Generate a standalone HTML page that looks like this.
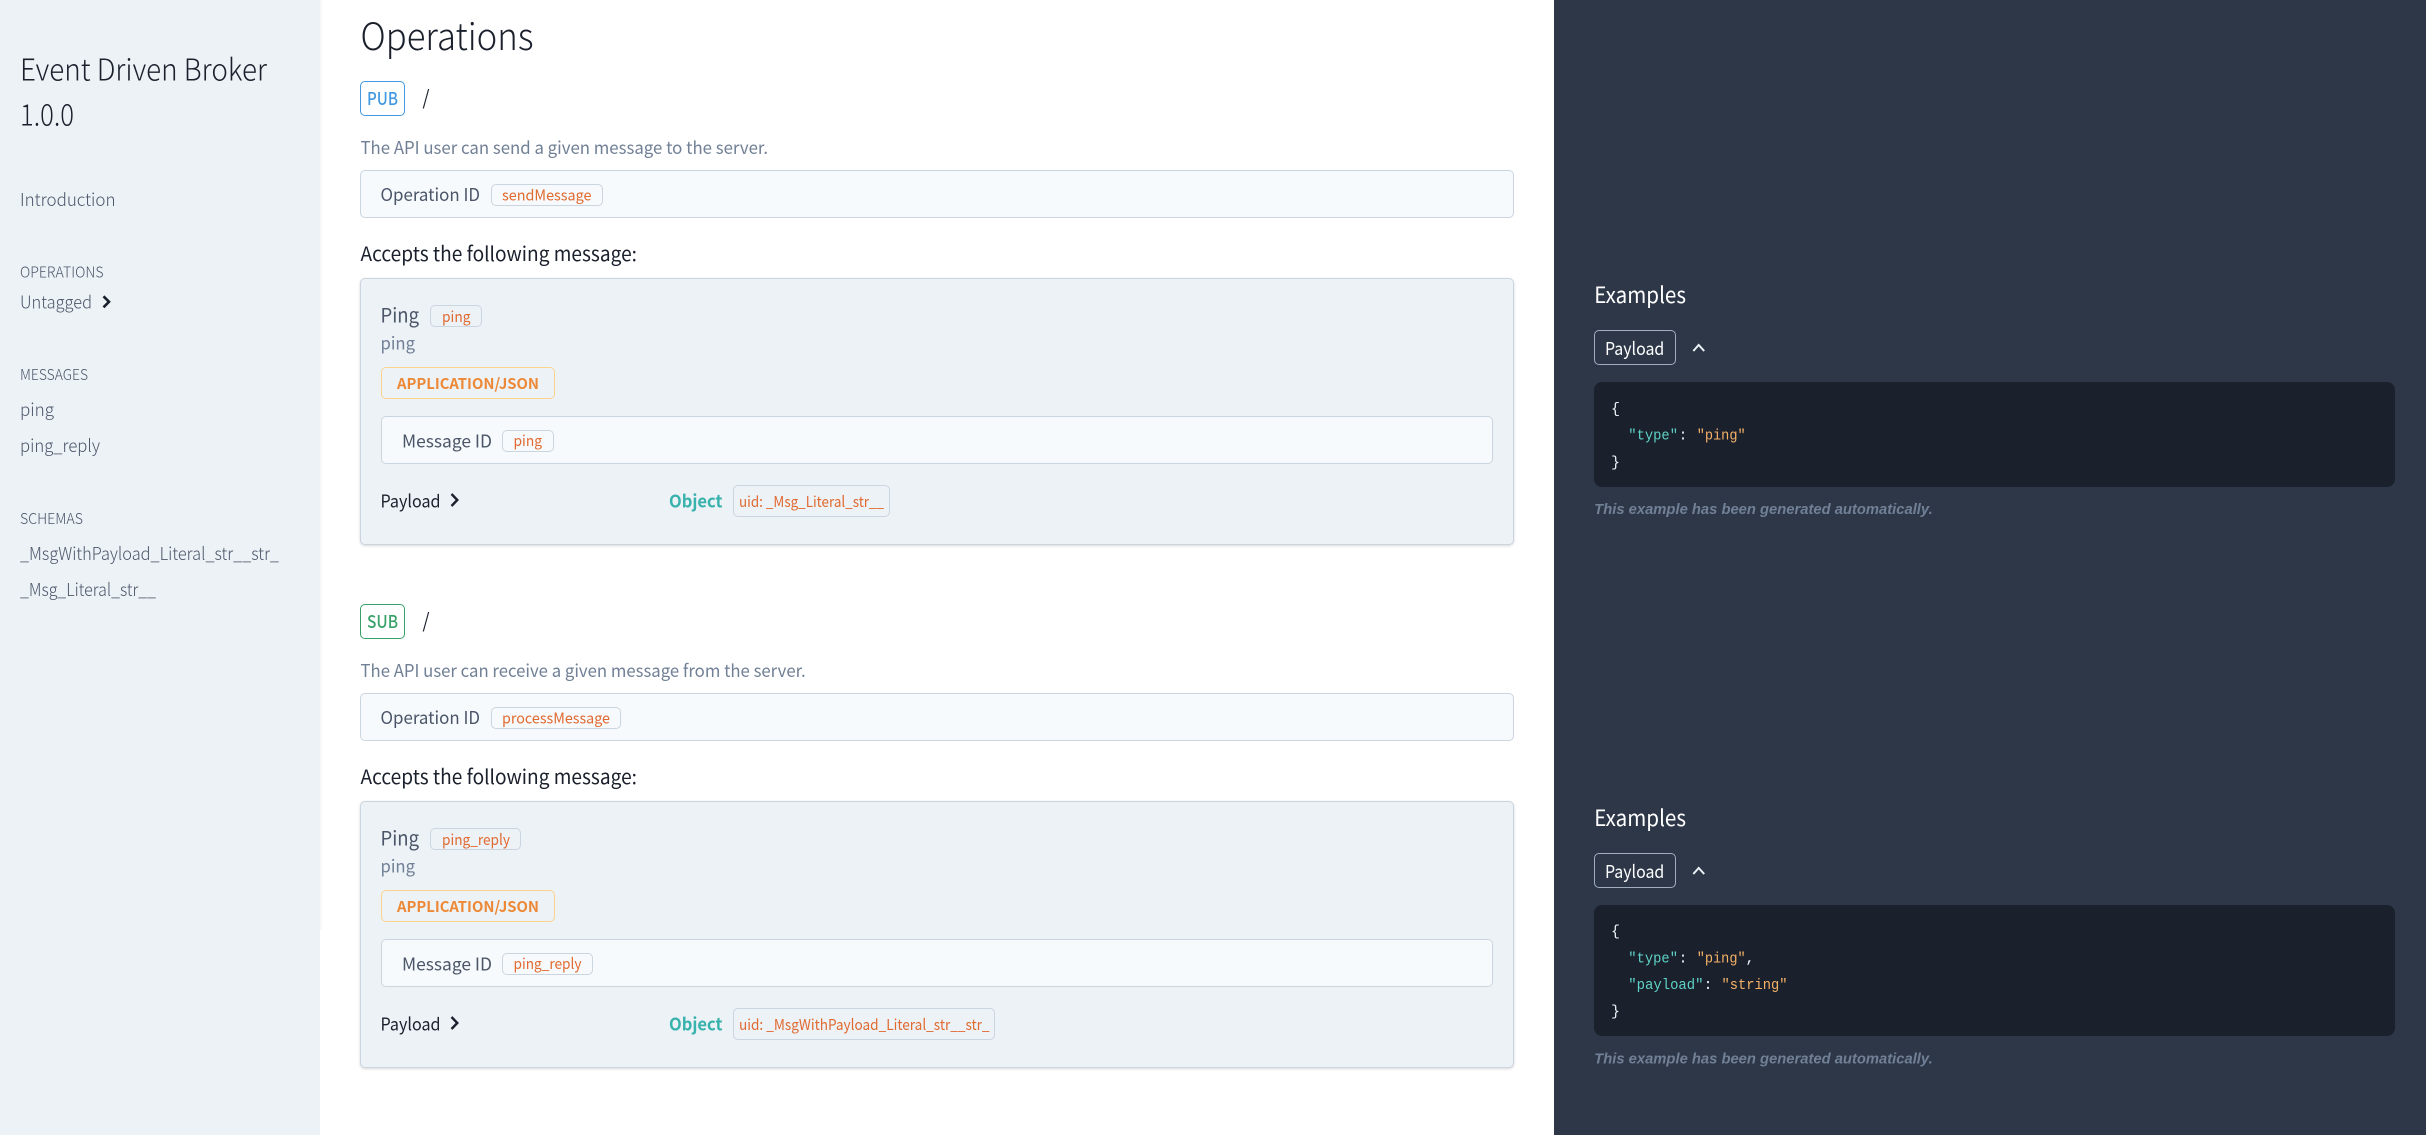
<!DOCTYPE html>
<html lang="en">
<head>
<meta charset="utf-8">
<title>Event Driven Broker 1.0.0</title>
<style>
html,body{margin:0;padding:0;width:2426px;height:1135px;overflow:hidden;background:#fff}
.b{position:absolute;box-sizing:border-box}
#side{left:0;top:0;width:320px;height:1135px;background:#edf2f7}
#sideedge{left:320px;top:0;width:2px;height:930px;background:#f6f8fa}
#panel{left:1554px;top:0;width:872px;height:1135px;background:#2d3748}
.badge{width:45px;height:35px;border-radius:5px;border:1px solid;background:#fff}
.opid{left:360px;width:1154px;height:48px;background:#f7fafc;border:1px solid #cbd5e0;border-radius:5px}
.card{left:360px;width:1154px;height:267px;background:#edf2f7;border:1px solid #cbd5e0;border-radius:5px;box-shadow:0 1px 3px rgba(0,0,0,.1),0 1px 2px rgba(0,0,0,.06)}
.tag{height:22px;border:1px solid #cbd5e0;border-radius:5px}
.app{left:381px;width:174px;height:32px;border:1px solid #fbd38d;border-radius:5px}
.mid{left:381px;width:1112px;height:48px;background:#f7fafc;border:1px solid #cbd5e0;border-radius:5px}
.uid{left:733px;height:32px;border:1px solid #cbd5e0;border-radius:5px}
.btn{left:1594px;width:82px;height:35px;border:1px solid #a0aec0;border-radius:5px}
.code{left:1594px;width:801px;background:#1a202c;border-radius:8px}
svg{position:absolute;left:0;top:0}
text{font-family:"Noto Sans CJK JP","Liberation Sans",sans-serif;white-space:pre}
.l{font-weight:300}
.s{font-weight:500}
.m{font-family:"Liberation Mono",monospace;font-size:15px}
.f{font-family:"Liberation Sans",sans-serif;font-weight:700;font-style:italic;font-size:14.5px;fill:#718096}
</style>
</head>
<body>
<div class="b" id="side"></div>
<div class="b" id="sideedge"></div>
<div class="b" id="panel"></div>

<div class="b badge" style="left:360px;top:81px;border-color:#4299e1"></div>
<div class="b opid" style="top:170px"></div>
<div class="b tag" style="left:491px;top:184px;width:112px"></div>
<div class="b card" style="top:278px"></div>
<div class="b tag" style="left:430px;top:305px;width:52px"></div>
<div class="b app" style="top:367px"></div>
<div class="b mid" style="top:416px"></div>
<div class="b tag" style="left:502px;top:430px;width:52px"></div>
<div class="b uid" style="top:485px;width:157px"></div>

<div class="b badge" style="left:360px;top:604px;border-color:#38a169"></div>
<div class="b opid" style="top:693px"></div>
<div class="b tag" style="left:491px;top:707px;width:130px"></div>
<div class="b card" style="top:801px"></div>
<div class="b tag" style="left:430px;top:828px;width:91px"></div>
<div class="b app" style="top:890px"></div>
<div class="b mid" style="top:939px"></div>
<div class="b tag" style="left:502px;top:953px;width:91px"></div>
<div class="b uid" style="top:1008px;width:262px"></div>

<div class="b btn" style="top:330px"></div>
<div class="b code" style="top:382px;height:105px"></div>
<div class="b btn" style="top:853px"></div>
<div class="b code" style="top:905px;height:131px"></div>

<svg width="2426" height="1135" viewBox="0 0 2426 1135" xmlns="http://www.w3.org/2000/svg">
  <!-- sidebar -->
  <g fill="#1a202c" font-size="30">
    <text class="l" x="20" y="80.5" textLength="247" lengthAdjust="spacingAndGlyphs">Event Driven Broker</text>
    <text class="l" x="20" y="125.5" textLength="54" lengthAdjust="spacingAndGlyphs">1.0.0</text>
  </g>
  <g fill="#4a5568" font-size="17.5">
    <text class="l" x="20" y="206" textLength="95.5" lengthAdjust="spacingAndGlyphs">Introduction</text>
    <text class="l" x="20" y="308.7" textLength="72" lengthAdjust="spacingAndGlyphs">Untagged</text>
    <text class="l" x="20" y="416" textLength="34" lengthAdjust="spacingAndGlyphs">ping</text>
    <text class="l" x="20" y="452" textLength="80" lengthAdjust="spacingAndGlyphs">ping_reply</text>
    <text class="l" x="20" y="560" textLength="259" lengthAdjust="spacingAndGlyphs">_MsgWithPayload_Literal_str__str_</text>
    <text class="l" x="20" y="596" textLength="136" lengthAdjust="spacingAndGlyphs">_Msg_Literal_str__</text>
  </g>
  <g fill="#4a5568" font-size="15">
    <text class="l" x="20" y="277.5" textLength="83.5" lengthAdjust="spacingAndGlyphs">OPERATIONS</text>
    <text class="l" x="20" y="380" textLength="68" lengthAdjust="spacingAndGlyphs">MESSAGES</text>
    <text class="l" x="20" y="524" textLength="63" lengthAdjust="spacingAndGlyphs">SCHEMAS</text>
  </g>
  <path d="M103.5 296.3 L109 301.8 L103.5 307.3" fill="none" stroke="#1a202c" stroke-width="2.6"/>

  <!-- main heading -->
  <text class="l" x="360.5" y="50" font-size="37.5" fill="#1a202c" textLength="173" lengthAdjust="spacingAndGlyphs">Operations</text>

  <!-- operation 1 -->
  <text class="s" x="367" y="105" font-size="17.5" fill="#4299e1" textLength="31" lengthAdjust="spacingAndGlyphs">PUB</text>
  <text x="422.5" y="105" font-size="20" fill="#1a202c" textLength="7" lengthAdjust="spacingAndGlyphs">/</text>
  <text x="360.5" y="154" font-size="17.5" fill="#718096" textLength="407.5" lengthAdjust="spacingAndGlyphs">The API user can send a given message to the server.</text>
  <text x="380.5" y="201" font-size="17.5" fill="#4a5568" textLength="99.5" lengthAdjust="spacingAndGlyphs">Operation ID</text>
  <text x="502" y="200.5" font-size="15" fill="#e06a30" textLength="89.5" lengthAdjust="spacingAndGlyphs">sendMessage</text>
  <text x="360.5" y="261" font-size="20" fill="#1a202c" textLength="276.5" lengthAdjust="spacingAndGlyphs">Accepts the following message:</text>
  <text x="380.5" y="322.7" font-size="20" fill="#4a5568" textLength="38.5" lengthAdjust="spacingAndGlyphs">Ping</text>
  <text x="442" y="322.2" font-size="15" fill="#e06a30" textLength="28.5" lengthAdjust="spacingAndGlyphs">ping</text>
  <text x="380.5" y="349.3" font-size="17.5" fill="#718096" textLength="34.5" lengthAdjust="spacingAndGlyphs">ping</text>
  <text x="397" y="389" font-size="15" font-weight="700" fill="#ed8936" textLength="142" lengthAdjust="spacingAndGlyphs">APPLICATION/JSON</text>
  <text x="402" y="447.3" font-size="17.5" fill="#4a5568" textLength="90" lengthAdjust="spacingAndGlyphs">Message ID</text>
  <text x="513.5" y="446.2" font-size="15" fill="#e06a30" textLength="28.5" lengthAdjust="spacingAndGlyphs">ping</text>
  <text x="380.5" y="507.3" font-size="17.5" fill="#1a202c" textLength="60" lengthAdjust="spacingAndGlyphs">Payload</text>
  <path d="M451.5 494 L457.3 500 L451.5 506" fill="none" stroke="#1a202c" stroke-width="2.4"/>
  <text x="669" y="507.5" font-size="17.5" font-weight="700" fill="#38b2ac" textLength="53.5" lengthAdjust="spacingAndGlyphs">Object</text>
  <text x="739" y="507" font-size="15" fill="#e06a30" textLength="145" lengthAdjust="spacingAndGlyphs">uid: _Msg_Literal_str__</text>

  <!-- operation 2 -->
  <text class="s" x="367" y="628" font-size="17.5" fill="#38a169" textLength="31" lengthAdjust="spacingAndGlyphs">SUB</text>
  <text x="422.5" y="628" font-size="20" fill="#1a202c" textLength="7" lengthAdjust="spacingAndGlyphs">/</text>
  <text x="360.5" y="677" font-size="17.5" fill="#718096" textLength="445.2" lengthAdjust="spacingAndGlyphs">The API user can receive a given message from the server.</text>
  <text x="380.5" y="724" font-size="17.5" fill="#4a5568" textLength="99.5" lengthAdjust="spacingAndGlyphs">Operation ID</text>
  <text x="502" y="723.5" font-size="15" fill="#e06a30" textLength="108" lengthAdjust="spacingAndGlyphs">processMessage</text>
  <text x="360.5" y="784" font-size="20" fill="#1a202c" textLength="276.5" lengthAdjust="spacingAndGlyphs">Accepts the following message:</text>
  <text x="380.5" y="845.7" font-size="20" fill="#4a5568" textLength="38.5" lengthAdjust="spacingAndGlyphs">Ping</text>
  <text x="442" y="845.2" font-size="15" fill="#e06a30" textLength="68" lengthAdjust="spacingAndGlyphs">ping_reply</text>
  <text x="380.5" y="872.3" font-size="17.5" fill="#718096" textLength="34.5" lengthAdjust="spacingAndGlyphs">ping</text>
  <text x="397" y="912" font-size="15" font-weight="700" fill="#ed8936" textLength="142" lengthAdjust="spacingAndGlyphs">APPLICATION/JSON</text>
  <text x="402" y="970.3" font-size="17.5" fill="#4a5568" textLength="90" lengthAdjust="spacingAndGlyphs">Message ID</text>
  <text x="513.5" y="969.2" font-size="15" fill="#e06a30" textLength="68" lengthAdjust="spacingAndGlyphs">ping_reply</text>
  <text x="380.5" y="1030.3" font-size="17.5" fill="#1a202c" textLength="60" lengthAdjust="spacingAndGlyphs">Payload</text>
  <path d="M451.5 1017 L457.3 1023 L451.5 1029" fill="none" stroke="#1a202c" stroke-width="2.4"/>
  <text x="669" y="1030.5" font-size="17.5" font-weight="700" fill="#38b2ac" textLength="53.5" lengthAdjust="spacingAndGlyphs">Object</text>
  <text x="739" y="1030" font-size="15" fill="#e06a30" textLength="250.5" lengthAdjust="spacingAndGlyphs">uid: _MsgWithPayload_Literal_str__str_</text>

  <!-- examples 1 -->
  <text x="1594.2" y="303" font-size="22.5" fill="#fff" textLength="91.8" lengthAdjust="spacingAndGlyphs">Examples</text>
  <text x="1605" y="355" font-size="17.5" fill="#fff" textLength="59.3" lengthAdjust="spacingAndGlyphs">Payload</text>
  <path d="M1693.3 351 L1698.7 345 L1704.2 351" fill="none" stroke="#edf2f7" stroke-width="2"/>
  <text class="m" x="1611" y="413" fill="#edf2f7">{</text>
  <text class="m" x="1628.3" y="439.7" fill="#5fd3c7" textLength="49.7" lengthAdjust="spacingAndGlyphs">"type"</text>
  <text class="m" x="1678.5" y="439.7" fill="#edf2f7">:</text>
  <text class="m" x="1696.7" y="439.7" fill="#f7b267" textLength="49" lengthAdjust="spacingAndGlyphs">"ping"</text>
  <text class="m" x="1611" y="466.4" fill="#edf2f7">}</text>
  <text class="f" x="1594.2" y="514" textLength="338.5" lengthAdjust="spacingAndGlyphs">This example has been generated automatically.</text>

  <!-- examples 2 -->
  <text x="1594.2" y="826" font-size="22.5" fill="#fff" textLength="91.8" lengthAdjust="spacingAndGlyphs">Examples</text>
  <text x="1605" y="878" font-size="17.5" fill="#fff" textLength="59.3" lengthAdjust="spacingAndGlyphs">Payload</text>
  <path d="M1693.3 874 L1698.7 868 L1704.2 874" fill="none" stroke="#edf2f7" stroke-width="2"/>
  <text class="m" x="1611" y="935.7" fill="#edf2f7">{</text>
  <text class="m" x="1628.3" y="962.4" fill="#5fd3c7" textLength="49.7" lengthAdjust="spacingAndGlyphs">"type"</text>
  <text class="m" x="1678.5" y="962.4" fill="#edf2f7">:</text>
  <text class="m" x="1696.7" y="962.4" fill="#f7b267" textLength="49" lengthAdjust="spacingAndGlyphs">"ping"</text>
  <text class="m" x="1745.5" y="962.4" fill="#edf2f7">,</text>
  <text class="m" x="1628.3" y="989" fill="#5fd3c7" textLength="75.2" lengthAdjust="spacingAndGlyphs">"payload"</text>
  <text class="m" x="1703.5" y="989" fill="#edf2f7">:</text>
  <text class="m" x="1721.5" y="989" fill="#f7b267" textLength="66" lengthAdjust="spacingAndGlyphs">"string"</text>
  <text class="m" x="1611" y="1015.7" fill="#edf2f7">}</text>
  <text class="f" x="1594.2" y="1063.3" textLength="338.5" lengthAdjust="spacingAndGlyphs">This example has been generated automatically.</text>
</svg>
</body>
</html>
